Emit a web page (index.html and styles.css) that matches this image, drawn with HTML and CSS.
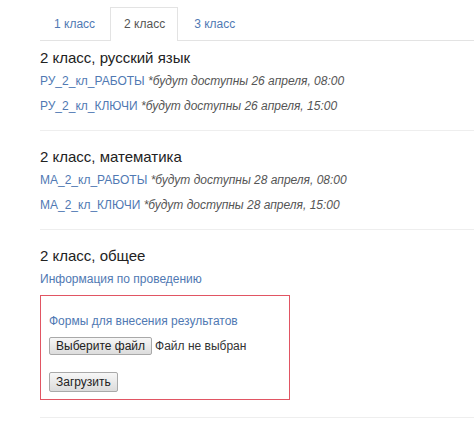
FILE: index.html
```html
<!DOCTYPE html>
<html lang="ru">
<head>
    <meta charset="UTF-8">
    <meta name="viewport" content="width=device-width, initial-scale=1.0">
    <title>Материалы 2 класс</title>
    <link rel="stylesheet" href="styles.css">
</head>
<body>
    <div class="page">
        <ul class="nav-tabs">
            <li class="tab"><a href="#">1 класс</a></li>
            <li class="tab active"><a href="#">2 класс</a></li>
            <li class="tab"><a href="#">3 класс</a></li>
        </ul>

        <div class="section">
            <h3>2 класс, русский язык</h3>
            <p class="row"><a href="#">РУ_2_кл_РАБОТЫ</a> <em>*будут доступны 26 апреля, 08:00</em></p>
            <p class="row"><a href="#">РУ_2_кл_КЛЮЧИ</a> <em>*будут доступны 26 апреля, 15:00</em></p>
        </div>

        <div class="section">
            <h3>2 класс, математика</h3>
            <p class="row"><a href="#">МА_2_кл_РАБОТЫ</a> <em>*будут доступны 28 апреля, 08:00</em></p>
            <p class="row"><a href="#">МА_2_кл_КЛЮЧИ</a> <em>*будут доступны 28 апреля, 15:00</em></p>
        </div>

        <div class="section last">
            <h3>2 класс, общее</h3>
            <p class="row"><a href="#">Информация по проведению</a></p>

            <form class="upload-box">
                <p class="upload-title"><a href="#">Формы для внесения результатов</a></p>
                <div class="file-row">
                    <button type="button" class="btn btn-file">Выберите файл</button>
                    <span class="file-name">Файл не выбран</span>
                </div>
                <button type="submit" class="btn btn-upload">Загрузить</button>
            </form>
        </div>
    </div>
</body>
</html>
```

FILE: styles.css
```css
body {
    margin: 0;
    font-family: "Liberation Sans", Arial, sans-serif;
    font-size: 12px;
    color: #333;
    background: #fff;
}

a {
    color: #5079b3;
    text-decoration: none;
}

.page {
    padding: 7px 0 0 40px;
}

.nav-tabs {
    display: flex;
    list-style: none;
    margin: 0;
    padding: 0;
    border-bottom: 1px solid #e3e3e3;
}

.tab {
    margin-right: 2px;
    margin-bottom: -1px;
}

.tab a {
    display: block;
    padding: 8px 12px 8px 13px;
    line-height: 16px;
    border: 1px solid transparent;
    border-bottom: none;
}

.tab.active a {
    color: #555;
    background: #fff;
    border-color: #e3e3e3;
    padding-bottom: 9px;
}

.section {
    padding: 16px 0 9px;
    border-bottom: 1px solid #eee;
}

.section:first-of-type {
    padding-top: 7px;
}

.section.last {
    padding-bottom: 17px;
}

h3 {
    margin: 0 0 3px;
    font-size: 15px;
    font-weight: normal;
    line-height: 20px;
    color: #222;
}

.row {
    margin: 0 0 5px;
    line-height: 20px;
}

.row em {
    color: #555;
}

.upload-box {
    width: 232px;
    margin-top: 6px;
    padding: 15px 8px 7px;
    border: 1px solid #e15563;
}

.upload-title {
    margin: 0 0 6px;
    line-height: 20px;
}

.file-row {
    display: flex;
    align-items: center;
    gap: 3px;
    margin-bottom: 17px;
}

.file-name {
    color: #333;
}

.btn {
    font-family: "Liberation Sans", Arial, sans-serif;
    font-size: 12px;
    color: #222;
    background: linear-gradient(#f7f7f7, #dcdcdc);
    border: 1px solid #a9a9a9;
    border-radius: 2px;
    padding: 0 6px;
    cursor: pointer;
}

.btn-file {
    height: 18px;
}

.btn-upload {
    height: 20px;
    display: block;
}
```
